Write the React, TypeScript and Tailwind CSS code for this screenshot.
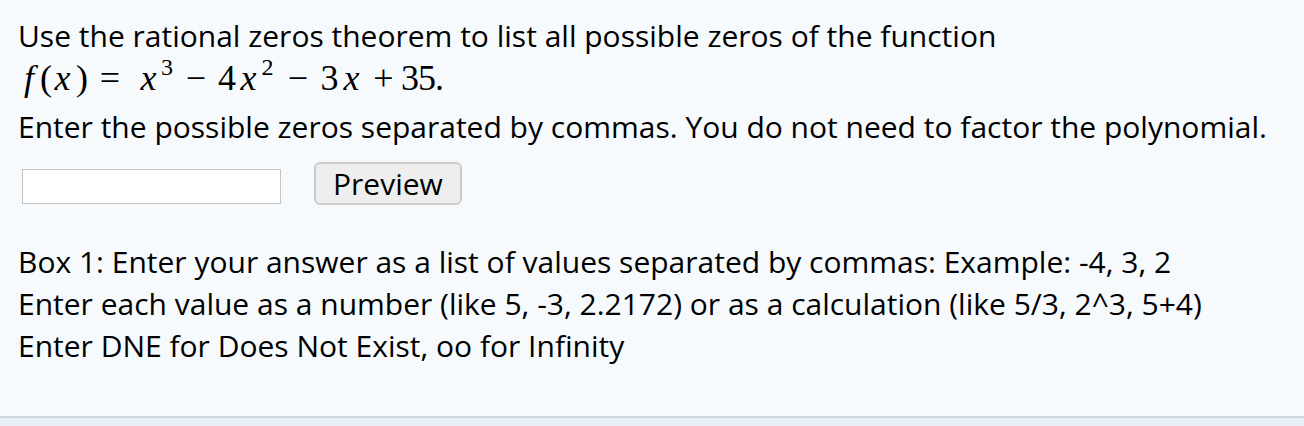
const tok = "inline-block text-center";
const sup = "inline-block text-center text-[24px] relative -top-[15px]";
const vx = "inline-block text-center italic";

export default function App() {
  return (
    <div className="w-[1304px] h-[426px] flex flex-col bg-[#f6fafd] font-['Open_Sans',sans-serif] text-black">
      <div className="h-[416px] px-[18px] pt-[15px] text-[30px] leading-[42px]">
        <p>Use the rational zeros theorem to list all possible zeros of the function</p>

        {/* formula */}
        <div className="h-[49px] flex items-baseline font-['Liberation_Serif',serif] text-[36px] leading-[42px]">
          <span className={`${tok} w-[22px] italic`}>f</span>
          <span className={`${tok} w-[9px]`}>(</span>
          <span className={`${vx} w-[27px]`}>x</span>
          <span className={`${tok} w-[9px]`}>)</span>
          <span className={`${tok} w-[11px]`} />
          <span className={`${tok} w-[28px]`}>=</span>
          <span className={`${tok} w-[12px]`} />
          <span className={`${vx} w-[25px]`}>x</span>
          <span className={`${sup} w-[12px]`}>3</span>
          <span className={`${tok} w-[9px]`} />
          <span className={`${tok} w-[28px]`}>−</span>
          <span className={`${tok} w-[8px]`} />
          <span className={`${tok} w-[18px]`}>4</span>
          <span className={`${vx} w-[25px]`}>x</span>
          <span className={`${sup} w-[13px]`}>2</span>
          <span className={`${tok} w-[11px]`} />
          <span className={`${tok} w-[26px]`}>−</span>
          <span className={`${tok} w-[9px]`} />
          <span className={`${tok} w-[19px]`}>3</span>
          <span className={`${vx} w-[25px]`}>x</span>
          <span className={`${tok} w-[4px]`} />
          <span className={`${tok} w-[31px]`}>+</span>
          <span className={`${tok} w-[2px]`} />
          <span className={`${tok} w-[17px]`}>3</span>
          <span className={`${tok} w-[17px]`}>5</span>
          <span className={`${tok} w-[9px]`}>.</span>
        </div>

        <p>Enter the possible zeros separated by commas. You do not need to factor the polynomial.</p>

        <div className="mt-[14px] flex items-end gap-[33px] pl-[4px]">
          <input type="text" className="mb-[1px] w-[259px] h-[35px] bg-white border border-[#c4c4c4] outline-none" />
          <button className="h-[43px] px-[17px] bg-[#eeeeee] border-2 border-[#cccccc] rounded-[6px] text-[30px] leading-[36px]">
            Preview
          </button>
        </div>

        <div className="mt-[36px]">
          <p>Box 1: Enter your answer as a list of values separated by commas: Example: -4, 3, 2</p>
          <p>Enter each value as a number (like 5, -3, 2.2172) or as a calculation (like 5/3, 2^3, 5+4)</p>
          <p>Enter DNE for Does Not Exist, oo for Infinity</p>
        </div>
      </div>
      <div className="h-[2px] bg-[#ccd6de]" />
      <div className="flex-1 bg-[#e9eff5]" />
    </div>
  );
}
